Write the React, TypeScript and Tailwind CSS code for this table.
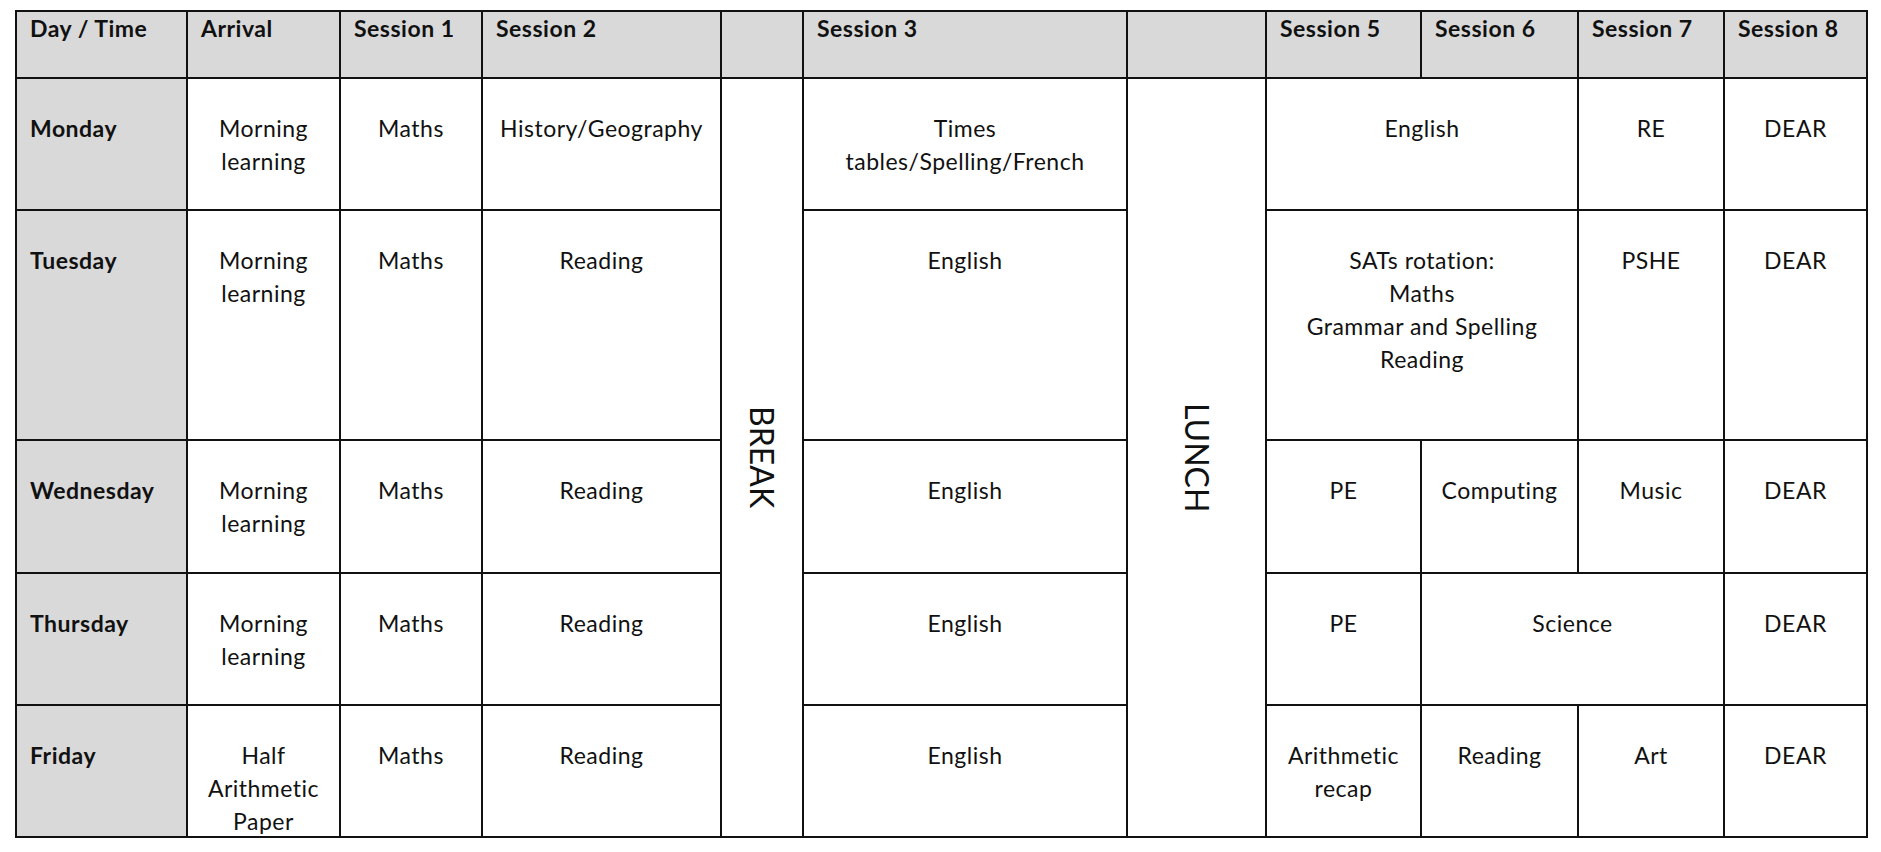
import React from "react";

type Cell = {
  text: string;
  kind?: "head" | "day" | "body" | "side";
  span?: string;
};

const FONT = "font-['Lato','Liberation_Sans',sans-serif]";

const rows: Cell[] = [
  { text: "Day / Time", kind: "head" },
  { text: "Arrival", kind: "head" },
  { text: "Session 1", kind: "head" },
  { text: "Session 2", kind: "head" },
  { text: "", kind: "head" },
  { text: "Session 3", kind: "head" },
  { text: "", kind: "head" },
  { text: "Session 5", kind: "head" },
  { text: "Session 6", kind: "head" },
  { text: "Session 7", kind: "head" },
  { text: "Session 8", kind: "head" },

  { text: "Monday", kind: "day" },
  { text: "Morning\nlearning" },
  { text: "Maths" },
  { text: "History/Geography" },
  { text: "BREAK", kind: "side", span: "row-span-5" },
  { text: "Times\ntables/Spelling/French" },
  { text: "LUNCH", kind: "side", span: "row-span-5" },
  { text: "English", span: "col-span-2" },
  { text: "RE" },
  { text: "DEAR" },

  { text: "Tuesday", kind: "day" },
  { text: "Morning\nlearning" },
  { text: "Maths" },
  { text: "Reading" },
  { text: "English" },
  { text: "SATs rotation:\nMaths\nGrammar and Spelling\nReading", span: "col-span-2" },
  { text: "PSHE" },
  { text: "DEAR" },

  { text: "Wednesday", kind: "day" },
  { text: "Morning\nlearning" },
  { text: "Maths" },
  { text: "Reading" },
  { text: "English" },
  { text: "PE" },
  { text: "Computing" },
  { text: "Music" },
  { text: "DEAR" },

  { text: "Thursday", kind: "day" },
  { text: "Morning\nlearning" },
  { text: "Maths" },
  { text: "Reading" },
  { text: "English" },
  { text: "PE" },
  { text: "Science", span: "col-span-2" },
  { text: "DEAR" },

  { text: "Friday", kind: "day" },
  { text: "Half\nArithmetic\nPaper" },
  { text: "Maths" },
  { text: "Reading" },
  { text: "English" },
  { text: "Arithmetic\nrecap" },
  { text: "Reading" },
  { text: "Art" },
  { text: "DEAR" },
];

function TimetableCell({ cell }: { cell: Cell }) {
  const kind = cell.kind ?? "body";

  if (kind === "side") {
    return (
      <div className={`${cell.span ?? ""} bg-white flex items-center justify-center`}>
        <span className="[writing-mode:vertical-rl] text-[32px] leading-none text-[#111]">
          {cell.text}
        </span>
      </div>
    );
  }

  const base = "whitespace-pre-line text-[23px] leading-[33px] tracking-[0.5px] text-[#111]";
  const styles = {
    head: "bg-[#d9d9d9] font-bold pl-[13px] text-left",
    day: "bg-[#d9d9d9] font-bold pl-[13px] pt-[33px] text-left",
    body: "bg-white pt-[33px] px-1 text-center",
  }[kind];

  return <div className={`${cell.span ?? ""} ${base} ${styles}`}>{cell.text}</div>;
}

export default function App() {
  return (
    <div className={`min-h-screen bg-white pl-[15px] pt-[10px] ${FONT}`}>
      <div className="grid w-fit gap-[2px] bg-[#111] p-[2px] grid-cols-[169px_151px_140px_237px_80px_322px_137px_153px_155px_144px_141px] grid-rows-[65px_130px_228px_131px_130px_130px]">
        {rows.map((cell, i) => (
          <TimetableCell key={i} cell={cell} />
        ))}
      </div>
    </div>
  );
}
